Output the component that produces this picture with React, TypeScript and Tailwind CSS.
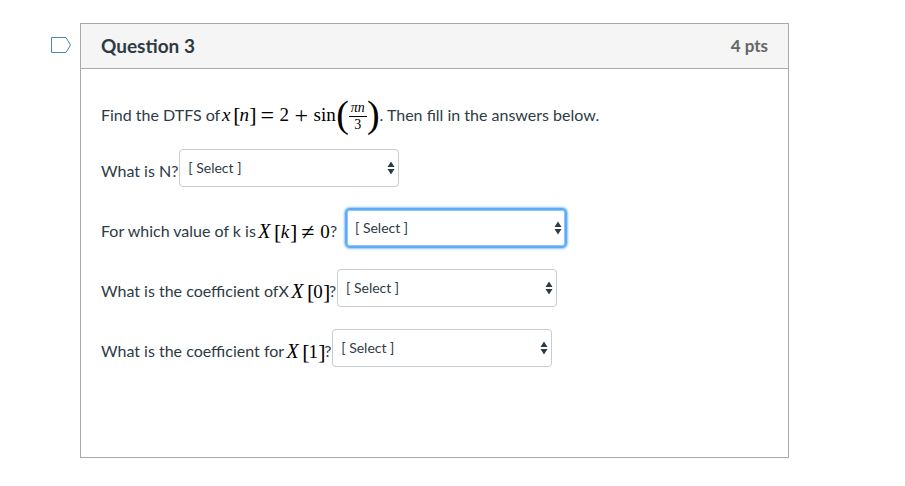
import { ReactNode, useState } from 'react';

type SymProps = { className: string; children: ReactNode };

// one symbol of a formula, centered in its own slot
function Sym({ className, children }: SymProps) {
    return <span className={`inline-block text-center ${className}`}>{children}</span>;
}

function Operator({ children }: { children: ReactNode }) {
    return <span className="inline-block w-6 text-center align-[-2px] text-2xl leading-6">{children}</span>;
}

function Formula({ children }: { children: ReactNode }) {
    return (
        <span className="ml-px whitespace-nowrap font-['Liberation_Serif',serif] text-[19px] leading-6 text-black">
            {children}
        </span>
    );
}

function Bracketed({ children }: { children: ReactNode }) {
    return (
        <span className="ml-0.5">
            <Sym className="w-[6px] align-[-1px] text-[22px] leading-6">[</Sym>
            {children}
            <Sym className="w-[6px] align-[-1px] text-[22px] leading-6">]</Sym>
        </span>
    );
}

type AnswerProps = {
    id: string;
    options: string[];
    autoFocus?: boolean;
    gap: string;
    children: ReactNode;
};

function Answer({ id, options, autoFocus, gap, children }: AnswerProps) {
    const [value, setValue] = useState<string>("");

    return (
        <div className={`flex flex-row items-center ${gap}`}>
            <label htmlFor={id} className="flex flex-row items-center whitespace-nowrap pt-1.5">{children}</label>
            <div className="relative w-[220px]">
                <select
                    id={id}
                    value={value}
                    autoFocus={autoFocus}
                    onChange={(e) => setValue(e.target.value)}
                    className="block w-full h-[38px] appearance-none rounded-[4px] border border-[#c7cdd1] bg-white pl-2 pr-6 text-sm text-[#2d3b45] outline-none focus:border-[#5eaaf7] focus:shadow-[0_0_0_1px_#5eaaf7,0_0_2px_2px_#8fc5fb,inset_0_0_0_1px_#8fc5fb]"
                >
                    <option value="">[ Select ]</option>
                    {options.map((option) => (
                        <option key={option} value={option}>{option}</option>
                    ))}
                </select>
                <svg className="pointer-events-none absolute right-1 top-3 h-[14px] w-2" viewBox="0 0 8 14" fill="#2d3b45" aria-hidden="true">
                    <path d="M4 .5 7.500 6h-7zM.5 8h7l-3.500 5.500z" />
                </svg>
            </div>
        </div>
    );
}

export default function App() {
    return (
        <main className="flex flex-row items-start gap-x-[9px] pl-[50px] pr-[116px] py-[23px] font-[Lato,sans-serif] text-base text-[#2d3b45]">
            <button type="button" aria-label="Flag question" className="mt-[13px] shrink-0">
                <svg className="block h-[18px] w-[21px]" viewBox="0 0 21 18" fill="none" stroke="#4a86a5">
                    <path d="M1.500 1.500h14.500l4.500 7.500-4.500 7.500h-14.500z" />
                </svg>
            </button>
            <section className="min-w-0 flex-1 border border-[#aaa] min-h-[435px]">
                <header className="flex flex-row items-center justify-between border-b border-[#aaa] bg-[#f5f5f5] px-5 h-[45px]">
                    <h1 className="text-[19px] font-bold">Question 3</h1>
                    <span className="text-[17px] font-bold text-[#666]">4 pts</span>
                </header>
                <div className="flex flex-col gap-y-[22px] px-5 pt-[26px] pb-5">
                    <p className="flex flex-row items-center h-10 -mb-2 whitespace-nowrap">
                        Find the DTFS of
                        <Formula>
                            <Sym className="w-[10px] italic">x</Sym>
                            <Bracketed><Sym className="w-[10px] italic">n</Sym></Bracketed>
                            <Operator>=</Operator>
                            <Sym className="w-[10px]">2</Sym>
                            <Operator>+</Operator>
                            <Sym className="w-[23px]">sin</Sym>
                        </Formula>
                        <span className="flex flex-row items-center font-['Liberation_Serif',serif] text-black">
                            <span className="pb-0.5 text-[38px] leading-none">(</span>
                            <span className="flex flex-col items-center pt-0.5 text-sm leading-4">
                                <span className="border-b border-black px-0.5 italic">πn</span>
                                <span>3</span>
                            </span>
                            <span className="pb-0.5 text-[38px] leading-none">)</span>
                        </span>
                        . Then fill in the answers below.
                    </p>
                    <Answer id="period" options={["3", "6", "12"]} gap="gap-x-px">
                        What is N?
                    </Answer>
                    <Answer id="harmonic" options={["0", "1", "2"]} gap="gap-x-[9px]" autoFocus>
                        For which value of k is
                        <Formula>
                            <Sym className="w-[15px] text-xl leading-6 italic">X</Sym>
                            <Bracketed><Sym className="w-[10px] italic">k</Sym></Bracketed>
                            <Operator>≠</Operator>
                            <Sym className="w-[10px]">0</Sym>
                        </Formula>
                        ?
                    </Answer>
                    <Answer id="coefficient-0" options={["0", "1", "2"]} gap="gap-x-px">
                        What is the coefficient ofX
                        <Formula>
                            <Sym className="w-[15px] text-xl leading-6 italic">X</Sym>
                            <Bracketed><Sym className="w-[10px]">0</Sym></Bracketed>
                        </Formula>
                        ?
                    </Answer>
                    <Answer id="coefficient-1" options={["1/2", "1/(2j)", "-1/(2j)"]} gap="gap-x-px">
                        What is the coefficient for
                        <Formula>
                            <Sym className="w-[15px] text-xl leading-6 italic">X</Sym>
                            <Bracketed><Sym className="w-[10px]">1</Sym></Bracketed>
                        </Formula>
                        ?
                    </Answer>
                </div>
            </section>
        </main>
    );
}
